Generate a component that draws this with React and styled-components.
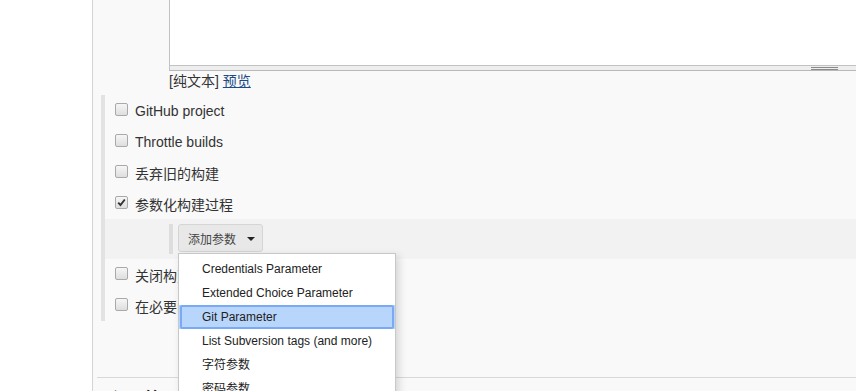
import React from "react";
import styled, { createGlobalStyle } from "styled-components";

const GlobalStyle = createGlobalStyle`
  html, body {
    margin: 0;
    padding: 0;
    height: 100%;
    overflow: hidden;
    background: #fff;
  }
  body {
    font-family: "Liberation Sans", Arial, "Noto Sans CJK SC", sans-serif;
    font-size: 14px;
    color: #333;
  }
  #root {
    height: 100%;
  }
`;

const Page = styled.div`
  display: flex;
  height: 391px;
  overflow: hidden;
`;

const SidePanel = styled.div`
  width: 92px;
  flex-shrink: 0;
  background: #fff;
  border-right: 1px solid #d4d4d4;
`;

const Main = styled.div`
  flex: 1;
  background: #f9f9f9;
  overflow: hidden;
`;

const TextBox = styled.div`
  margin-left: 76px;
  margin-right: -4px;
`;

const TextArea = styled.div`
  height: 65px;
  background: #fff;
  border-left: 1px solid #c2c2c2;
  border-bottom: 1px solid #c2c2c2;
`;

const ResizeBar = styled.div`
  height: 4px;
  background: #eee;
  border-left: 1px solid #c2c2c2;
  border-bottom: 1px solid #b8b8b8;
  display: flex;
  justify-content: flex-end;
  align-items: center;
  padding-right: 22px;
`;

const Grip = styled.div`
  width: 27px;
  height: 1px;
  border-top: 1px solid #8a8a8a;
  border-bottom: 1px solid #8a8a8a;
`;

const FormatLine = styled.div`
  margin-left: 76px;
  height: 19px;
  line-height: 20px;
  color: #333;
`;

const Link = styled.a`
  color: #204a87;
  text-decoration: underline;
  margin-left: 4px;
  cursor: pointer;
`;

const Options = styled.div`
  margin: 5px 0 0 8px;
  border-left: 4px solid #e2e2e2;
`;

const Row = styled.label`
  display: flex;
  align-items: center;
  height: 31px;
  padding-left: 10px;
  gap: 7px;
  white-space: nowrap;
`;

const Box = styled.span`
  width: 11px;
  height: 11px;
  margin-top: -3px;
  border: 1px solid #a9a9a9;
  border-radius: 2px;
  background: linear-gradient(#f6f6f6, #dedede);
  display: inline-flex;
  align-items: center;
  justify-content: center;
  flex-shrink: 0;
`;

const Label = styled.span`
  color: #333;
  font-size: 14px;
`;

const Band = styled.div`
  background: #f2f2f2;
  padding: 5px 0 5px 64px;
`;

const Handle = styled.div`
  border-left: 4px solid #ddd;
  height: 30px;
  padding-left: 5px;
  position: relative;
`;

const DropButton = styled.button`
  height: 28px;
  width: 85px;
  padding: 0 0 0 9px;
  display: flex;
  align-items: center;
  gap: 11px;
  background: #e8e8e8;
  border: 1px solid #d5d5d5;
  border-radius: 3px;
  font-family: inherit;
  font-size: 12px;
  color: #444;
`;

const Caret = styled.span`
  width: 0;
  height: 0;
  border-left: 4px solid transparent;
  border-right: 4px solid transparent;
  border-top: 4px solid #222;
  margin-top: 2px;
`;

const Menu = styled.ul`
  position: absolute;
  left: 5px;
  top: 29px;
  width: 216px;
  margin: 0;
  padding: 3px 0 0;
  list-style: none;
  background: #fff;
  border: 1px solid #c8c8c8;
  box-shadow: 3px 3px 8px rgba(0, 0, 0, 0.15);
  z-index: 10;
`;

const MenuItem = styled.li`
  height: 24px;
  padding: 0 1px;
  background: ${(p) => (p.$active ? "#b8d6fb" : "transparent")};
  white-space: nowrap;
`;

const ItemText = styled.div`
  height: 20px;
  line-height: 20px;
  padding-left: 20px;
  border: 2px solid ${(p) => (p.$active ? "#7aaaf6" : "transparent")};
  border-radius: 2px;
  color: #222;
  font-size: 12px;
`;

const Divider = styled.div`
  margin: 56px 0 0 4px;
  border-top: 1px solid #d8d8d8;
`;

const SectionTitle = styled.h3`
  margin: 7px 0 0 20px;
  font-size: 16px;
  font-weight: bold;
  color: #222;
`;

const Check = () => (
  <svg width="9" height="9" viewBox="0 0 9 9">
    <path d="M1.2 4.6 L3.5 7 L7.8 1.5" fill="none" stroke="#333" strokeWidth="1.9" />
  </svg>
);

function CheckRow({ label, checked }) {
  return (
    <Row>
      <Box>{checked && <Check />}</Box>
      <Label>{label}</Label>
    </Row>
  );
}

const MENU = [
  "Credentials Parameter",
  "Extended Choice Parameter",
  "Git Parameter",
  "List Subversion tags (and more)",
  "字符参数",
  "密码参数",
];

export default function App() {
  return (
    <>
      <GlobalStyle />
      <Page>
        <SidePanel />
        <Main>
          <TextBox>
            <TextArea />
            <ResizeBar>
              <Grip />
            </ResizeBar>
          </TextBox>
          <FormatLine>
            [纯文本]<Link>预览</Link>
          </FormatLine>
          <Options>
            <CheckRow label="GitHub project" />
            <CheckRow label="Throttle builds" />
            <CheckRow label="丢弃旧的构建" />
            <CheckRow label="参数化构建过程" checked />
            <Band>
              <Handle>
                <DropButton>
                  添加参数 <Caret />
                </DropButton>
                <Menu>
                  {MENU.map((m) => (
                    <MenuItem key={m} $active={m === "Git Parameter"}>
                      <ItemText $active={m === "Git Parameter"}>{m}</ItemText>
                    </MenuItem>
                  ))}
                </Menu>
              </Handle>
            </Band>
            <CheckRow label="关闭构建" />
            <CheckRow label="在必要的时候并发构建" />
          </Options>
          <Divider />
          <SectionTitle>源码管理</SectionTitle>
        </Main>
      </Page>
    </>
  );
}
